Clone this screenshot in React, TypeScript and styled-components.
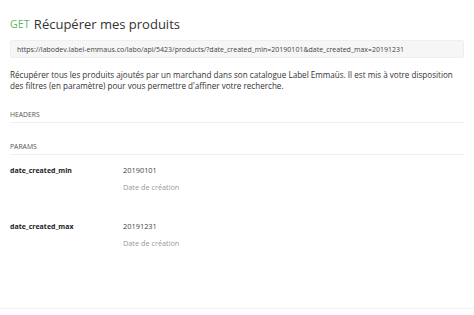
import React from "react"

// styles
import styled, { createGlobalStyle } from "styled-components"

const GlobalStyle = createGlobalStyle`
    html, body {
        margin: 0;
        padding: 0;
        background: #fff;
    }

    body {
        font-family: "Open Sans", "Noto Sans", sans-serif;
        color: #333;
    }
`

interface Param {
    name: string,
    value: string,
    description: string,
}

const params: Param[] = [
    { name: "date_created_min", value: "20190101", description: "Date de création" },
    { name: "date_created_max", value: "20191231", description: "Date de création" },
]

const Page = styled.div`
    width: 474px;
    min-height: 315px;
    box-sizing: border-box;
    padding: 15px 10px 0;
    display: flex;
    flex-direction: column;
`

const Title = styled.h1`
    margin: 0;
    display: flex;
    align-items: center;
    gap: 4px;
    font-size: 13px;
    line-height: 18px;
    font-weight: 400;
    color: #333;
`

const Method = styled.span`
    color: #5cb85c;
    font-size: 10.5px;
    letter-spacing: 0.2px;
`

const Url = styled.div`
    margin-top: 7px;
    height: 18px;
    box-sizing: border-box;
    padding: 0 6px;
    display: flex;
    align-items: center;
    background: #f6f6f6;
    border: 1px solid #efefef;
    border-radius: 2px;
    font-size: 7px;
    color: #444;
    white-space: nowrap;
    overflow: hidden;
`

const Description = styled.p`
    margin: 11px 0 0;
    font-size: 8.1px;
    line-height: 11px;
    color: #333;
`

const SectionTitle = styled.div`
    margin-top: 19px;
    padding-bottom: 2px;
    border-bottom: 1px solid #f0f0f0;
    font-size: 6.8px;
    line-height: 10px;
    color: #555;
    text-transform: uppercase;
`

const ParamRow = styled.div`
    display: grid;
    grid-template-columns: 113px 1fr;
    padding: 10px 0 18px;
`

const ParamName = styled.div`
    font-size: 7px;
    line-height: 11px;
    font-weight: 700;
    color: #222;
`

const ParamBody = styled.div`
    display: flex;
    flex-direction: column;
    gap: 6px;
`

const ParamValue = styled.div`
    font-size: 7.4px;
    line-height: 11px;
    color: #444;
`

const ParamDesc = styled.div`
    font-size: 7.3px;
    line-height: 11px;
    color: #999;
`

const Footer = styled.div`
    margin: 41px -10px 0;
    border-top: 1px solid #f0f0f0;
    height: 5px;
`

const App: React.FC = () => {
    return (
        <Page>
            <GlobalStyle />
            <Title>
                <Method>GET</Method>
                Récupérer mes produits
            </Title>
            <Url>https://labodev.label-emmaus.co/labo/api/5423/products/?date_created_min=20190101&amp;date_created_max=20191231</Url>
            <Description>
                Récupérer tous les produits ajoutés par un marchand dans son catalogue Label Emmaüs. Il est mis à votre disposition des filtres (en paramètre) pour vous permettre d'affiner votre recherche.
            </Description>
            <SectionTitle>Headers</SectionTitle>
            <SectionTitle>Params</SectionTitle>
            {params.map(param => (
                <ParamRow key={param.name}>
                    <ParamName>{param.name}</ParamName>
                    <ParamBody>
                        <ParamValue>{param.value}</ParamValue>
                        <ParamDesc>{param.description}</ParamDesc>
                    </ParamBody>
                </ParamRow>
            ))}
            <Footer />
        </Page>
    )
}

export default App
